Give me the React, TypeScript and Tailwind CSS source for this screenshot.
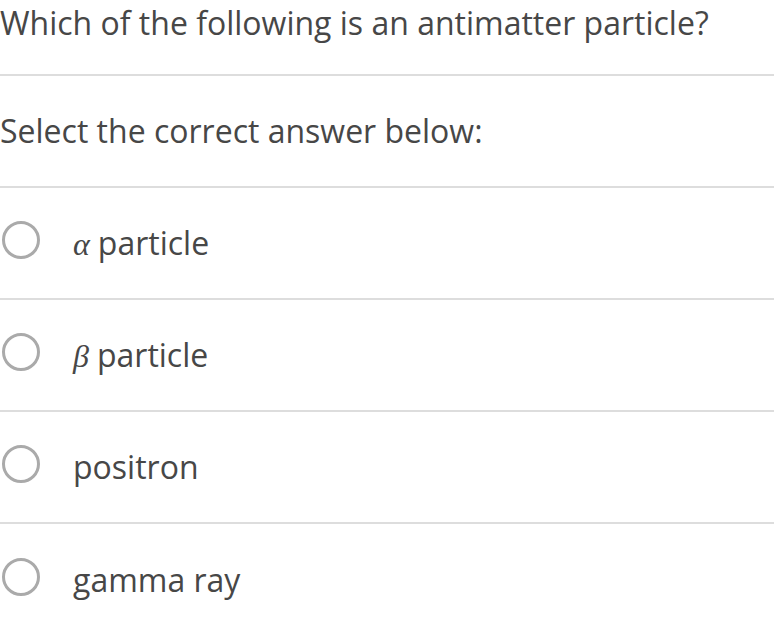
import React from "react";

type Option = { greek?: string; label: string };

const options: Option[] = [
  { greek: "α", label: "particle" },
  { greek: "β", label: "particle" },
  { label: "positron" },
  { label: "gamma ray" },
];

function Radio() {
  return (
    <span className="block w-[38px] h-[38px] mb-[6px] rounded-full border-[3px] border-[#aaaaaa] shrink-0" />
  );
}

export default function App() {
  return (
    <div
      className="w-[774px] bg-white text-[#474747]"
      style={{ fontFamily: '"Open Sans", sans-serif' }}
    >
      <div className="h-[76px] border-b-2 border-[#dddddd]">
        <h1 className="text-[32px] leading-[46px] font-normal">
          Which of the following is an antimatter particle?
        </h1>
      </div>

      <div className="h-[112px] flex items-center border-b-2 border-[#dddddd]">
        <p className="text-[32px] leading-[40px]">Select the correct answer below:</p>
      </div>

      {options.map((o, i) => (
        <div
          key={i}
          className={`h-[112px] flex items-center gap-[33px] pl-[2px] ${
            i < options.length - 1 ? "border-b-2 border-[#dddddd]" : ""
          }`}
        >
          <Radio />
          <span className="text-[32px] leading-[40px]">
            {o.greek && (
              <span
                className="italic mr-[8px]"
                style={{ fontFamily: '"Liberation Serif", serif' }}
              >
                {o.greek}
              </span>
            )}
            {o.label}
          </span>
        </div>
      ))}
    </div>
  );
}
